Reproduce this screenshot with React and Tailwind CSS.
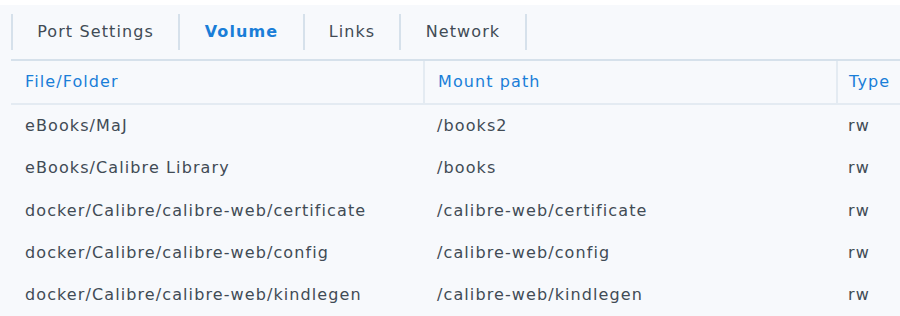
import React from 'react';

const tabs = [
  { label: 'Port Settings', width: 'w-[167px]' },
  { label: 'Volume', width: 'w-[125px]', active: true },
  { label: 'Links', width: 'w-[96px]' },
  { label: 'Network', width: 'w-[126px]' },
];

const rows = [
  { file: 'eBooks/MaJ', mount: '/books2', type: 'rw' },
  { file: 'eBooks/Calibre Library', mount: '/books', type: 'rw' },
  { file: 'docker/Calibre/calibre-web/certificate', mount: '/calibre-web/certificate', type: 'rw' },
  { file: 'docker/Calibre/calibre-web/config', mount: '/calibre-web/config', type: 'rw' },
  { file: 'docker/Calibre/calibre-web/kindlegen', mount: '/calibre-web/kindlegen', type: 'rw' },
];

const App = () => {
  return (
    <div className="w-[900px] h-[316px] overflow-hidden bg-white pt-[5px] font-['DejaVu_Sans',sans-serif] text-[16px] tracking-[1.1px]">
      <div className="h-full bg-[#f7f9fc] pl-[11px] pt-[9px]">
        {/* Tabs */}
        <div className="flex border-b-2 border-[#d6e1eb] h-[47px]">
          <div className="flex h-[36px] border-l-2 border-[#d6e1eb]">
            {tabs.map((tab) => (
              <div
                key={tab.label}
                className={`${tab.width} flex items-center justify-center border-r-2 border-[#d6e1eb] ${
                  tab.active ? 'font-bold text-[#1a7ed8]' : 'text-[#414b55]'
                }`}
              >
                {tab.label}
              </div>
            ))}
          </div>
        </div>

        {/* Table */}
        <div className="grid grid-cols-[412px_413px_1fr]">
          <div className="h-[44px] flex items-center pl-[14px] border-b-2 border-[#e4ebf2] text-[#1a7ed8]">File/Folder</div>
          <div className="h-[44px] flex items-center pl-[13px] border-b-2 border-l-2 border-[#e4ebf2] text-[#1a7ed8]">Mount path</div>
          <div className="h-[44px] flex items-center pl-[11px] border-b-2 border-l-2 border-[#e4ebf2] text-[#1a7ed8]">Type</div>
          {rows.map((row) => (
            <React.Fragment key={row.file}>
              <div className="h-[42.25px] flex items-center pl-[14px] text-[#414b55]">{row.file}</div>
              <div className="h-[42.25px] flex items-center pl-[14px] text-[#414b55]">{row.mount}</div>
              <div className="h-[42.25px] flex items-center pl-[12px] text-[#414b55]">{row.type}</div>
            </React.Fragment>
          ))}
        </div>
      </div>
    </div>
  );
};

export default App;
